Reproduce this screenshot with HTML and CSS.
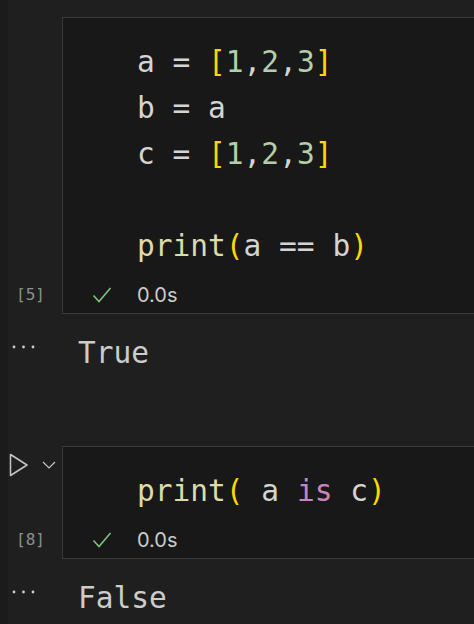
FILE: index.html
```html
<!DOCTYPE html>
<html lang="en">
<head>
<meta charset="utf-8">
<title>Notebook</title>
<link rel="stylesheet" href="styles.css">
</head>
<body>
<main class="notebook">
  <section class="cell cell-first">
    <div class="gutter">
      <span class="exec-count">[5]</span>
    </div>
    <div class="editor">
<pre class="code"><span class="id">a</span> <span class="op">=</span> <span class="br">[</span><span class="num">1</span><span class="op">,</span><span class="num">2</span><span class="op">,</span><span class="num">3</span><span class="br">]</span>
<span class="id">b</span> <span class="op">=</span> <span class="id">a</span>
<span class="id">c</span> <span class="op">=</span> <span class="br">[</span><span class="num">1</span><span class="op">,</span><span class="num">2</span><span class="op">,</span><span class="num">3</span><span class="br">]</span>

<span class="fn">print</span><span class="br">(</span><span class="id">a</span> <span class="op">==</span> <span class="id">b</span><span class="br">)</span></pre>
      <div class="status">
        <svg class="check" width="20" height="18" viewBox="0 0 20 18"><polyline points="1.5,9.5 7,15.5 18.5,2" fill="none" stroke="#7fc77f" stroke-width="1.5"/></svg>
        <span class="time">0.0s</span>
      </div>
    </div>
  </section>

  <section class="output">
    <div class="gutter">
      <svg class="dots" width="24" height="6" viewBox="0 0 24 6"><circle cx="3" cy="3" r="1.4"/><circle cx="12.5" cy="3" r="1.4"/><circle cx="22" cy="3" r="1.4"/></svg>
    </div>
    <pre class="out-text">True</pre>
  </section>

  <section class="cell cell-second">
    <div class="gutter gutter-run">
      <div class="run-controls">
        <svg class="run" width="20" height="24" viewBox="0 0 20 24"><polygon points="1.5,1.5 18,12 1.5,22.5" fill="none" stroke="#c5c5c5" stroke-width="1.5" stroke-linejoin="round"/></svg>
        <svg class="chev" width="14" height="8" viewBox="0 0 14 8"><polyline points="1,1 7,7 13,1" fill="none" stroke="#c5c5c5" stroke-width="1.2"/></svg>
      </div>
      <span class="exec-count">[8]</span>
    </div>
    <div class="editor">
<pre class="code"><span class="fn">print</span><span class="br">(</span> <span class="id">a</span> <span class="kw">is</span> <span class="id">c</span><span class="br">)</span></pre>
      <div class="status">
        <svg class="check" width="20" height="18" viewBox="0 0 20 18"><polyline points="1.5,9.5 7,15.5 18.5,2" fill="none" stroke="#7fc77f" stroke-width="1.5"/></svg>
        <span class="time">0.0s</span>
      </div>
    </div>
  </section>

  <section class="output">
    <div class="gutter">
      <svg class="dots" width="24" height="6" viewBox="0 0 24 6"><circle cx="3" cy="3" r="1.4"/><circle cx="12.5" cy="3" r="1.4"/><circle cx="22" cy="3" r="1.4"/></svg>
    </div>
    <pre class="out-text">False</pre>
  </section>
</main>
</body>
</html>
```

FILE: styles.css
```css
html, body {
  margin: 0;
  padding: 0;
  height: 100%;
}

body {
  background: #1f1f1f;
  overflow: hidden;
  border-left: 8px solid #1b1b1b;
  box-sizing: border-box;
}

.notebook {
  display: flex;
  flex-direction: column;
}

.cell {
  display: grid;
  grid-template-columns: 54px 1fr;
}

.cell-first {
  margin-top: 17px;
}

.output + .cell {
  margin-top: 70px;
}

.cell + .output {
  margin-top: 16px;
}

.gutter {
  display: flex;
  flex-direction: column;
  justify-content: flex-end;
}

.gutter-run {
  justify-content: space-between;
}

.exec-count {
  font-family: "DejaVu Sans Mono", monospace;
  font-size: 16px;
  line-height: 28px;
  color: #8e8e8e;
  margin: 0 0 5px 8px;
}

.run-controls {
  display: flex;
  align-items: center;
  gap: 13px;
  margin: 7px 0 0 1px;
}

.editor {
  background: #181818;
  border: 1px solid #3a3a3a;
  border-right: none;
  padding: 21px 0 4px 0;
}

.code {
  margin: 0 0 12px 0;
  padding-left: 74px;
  font-family: "DejaVu Sans Mono", monospace;
  font-size: 29.5px;
  line-height: 46px;
  color: #d4d4d4;
}

.id { color: #d4d4d4; }
.op { color: #d4d4d4; }
.br { color: #ffd700; }
.num { color: #b5cea8; }
.fn { color: #dcdcaa; }
.kw { color: #c586c0; }

.status {
  display: flex;
  align-items: center;
  height: 28px;
  padding-left: 29px;
}

.check {
  display: block;
}

.time {
  margin-left: 25px;
  font-family: Inter, "Noto Sans", sans-serif;
  font-size: 20px;
  color: #cccccc;
}

.output {
  display: grid;
  grid-template-columns: 54px 1fr;
}

.output .gutter {
  justify-content: flex-start;
}

.dots {
  display: block;
  fill: #cccccc;
  margin: 14px 0 0 3px;
}

.out-text {
  margin: 0;
  padding-left: 16px;
  font-family: "DejaVu Sans Mono", monospace;
  font-size: 29.5px;
  line-height: 46px;
  color: #cccccc;
}
```
